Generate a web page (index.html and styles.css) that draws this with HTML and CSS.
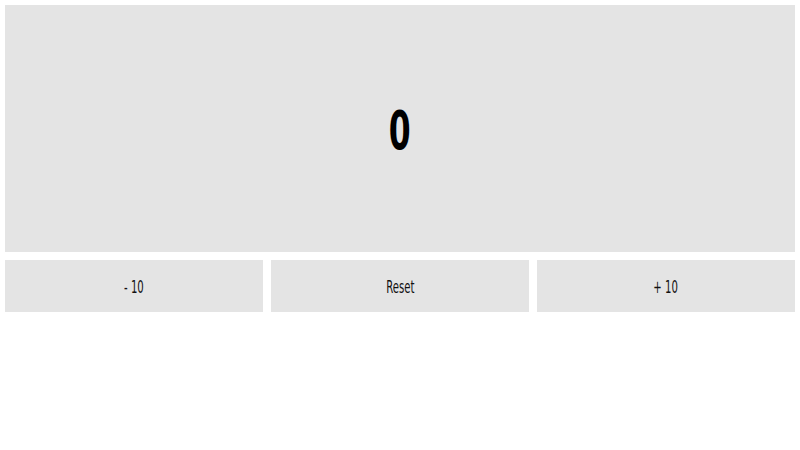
FILE: index.html
```html
<!DOCTYPE html>
<html>
<head>
<meta charset="utf-8">
<link rel="stylesheet" href="styles.css">
</head>
<body>
<div class="counter">
  <div class="display"><span class="value">0</span></div>
  <div class="controls">
    <button class="btn"><span class="label">- 10</span></button>
    <button class="btn"><span class="label">Reset</span></button>
    <button class="btn"><span class="label">+ 10</span></button>
  </div>
</div>
</body>
</html>
```
FILE: styles.css
```css
html, body {
  margin: 0;
  background: #ffffff;
}
body {
  padding: 5px;
  font-family: "DejaVu Sans Condensed", "Liberation Sans", sans-serif;
}
.counter {
  display: flex;
  flex-direction: column;
  gap: 8px;
}
.display {
  height: 247px;
  background: #e4e4e4;
  display: flex;
  align-items: center;
  justify-content: center;
  padding-top: 4px;
  box-sizing: border-box;
}
.value {
  display: inline-block;
  font-size: 53px;
  font-weight: 700;
  color: #000;
  transform: scaleX(0.66);
  line-height: 1;
}
.controls {
  display: grid;
  grid-template-columns: repeat(3, 1fr);
  gap: 8px;
}
.btn {
  height: 52px;
  border: 0;
  background: #e4e4e4;
  font-family: "DejaVu Sans Condensed", "Liberation Sans", sans-serif;
  font-size: 17px;
  font-weight: 200;
  color: #111;
  padding: 2px 0 0;
}
.label {
  display: inline-block;
  transform: scaleX(0.66);
}
```
